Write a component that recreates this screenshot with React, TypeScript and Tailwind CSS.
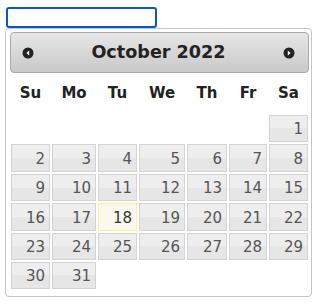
import React from "react";

const COLS = "grid-cols-[39px_44px_39px_46px_40px_38px_39px]";
const days = ["Su", "Mo", "Tu", "We", "Th", "Fr", "Sa"];

function Arrow({ dir }: { dir: "prev" | "next" }) {
  return (
    <svg width="12" height="12" viewBox="0 0 12 12" aria-hidden="true">
      <circle cx="6" cy="6" r="5.5" fill="#222222" />
      {dir === "prev" ? (
        <polygon points="7.2,3.4 7.2,8.6 4.4,6" fill="#ffffff" />
      ) : (
        <polygon points="4.8,3.4 4.8,8.6 7.6,6" fill="#ffffff" />
      )}
    </svg>
  );
}

export default function App() {
  const cells: (number | null)[] = [];
  for (let i = 0; i < 6; i++) cells.push(null);
  for (let d = 1; d <= 31; d++) cells.push(d);

  return (
    <div
      className="w-[320px] h-[305px] bg-white pl-[5px] pt-[7px] flex flex-col"
      style={{ fontFamily: '"DejaVu Sans", Verdana, sans-serif' }}
    >
      <div className="ml-[1px] w-[151px] h-[21px] border-2 border-[#0a56c4] rounded-[3px] bg-white" />
      <div className="w-[307px] border border-[#c5c5c5] rounded-[4px] bg-white pt-[3px] pl-[4px] pb-[7px]">
        <div className="w-[299px] h-[41px] border border-[#aaaaaa] rounded-[4px] bg-[linear-gradient(#e6e6e6,#c9c9c9)] flex items-center justify-between pl-[11px] pr-[13px]">
          <Arrow dir="prev" />
          <span className="text-[17.6px] font-bold text-[#222222] leading-none">
            October 2022
          </span>
          <Arrow dir="next" />
        </div>
        <div className={`ml-[1px] grid ${COLS} gap-x-[2px] gap-y-[2px]`}>
          {days.map((d) => (
            <div
              key={d}
              className="h-[40px] flex items-center justify-center text-[15px] font-bold text-[#222222]"
            >
              {d}
            </div>
          ))}
          {cells.map((d, i) =>
            d === null ? (
              <div key={i} className="h-[27.4px]" />
            ) : d === 18 ? (
              <div
                key={i}
                className="h-[27.4px] border border-[#fcefa1] bg-[#fbf9ee] text-[#363636] flex items-center justify-end pr-[4px] pt-[2px] text-[15px]"
              >
                {d}
              </div>
            ) : (
              <div
                key={i}
                className="h-[27.4px] border border-[#d3d3d3] bg-[linear-gradient(#eeeeee_50%,#e6e6e6_50%)] text-[#555555] flex items-center justify-end pr-[4px] pt-[2px] text-[15px]"
              >
                {d}
              </div>
            )
          )}
        </div>
      </div>
    </div>
  );
}
